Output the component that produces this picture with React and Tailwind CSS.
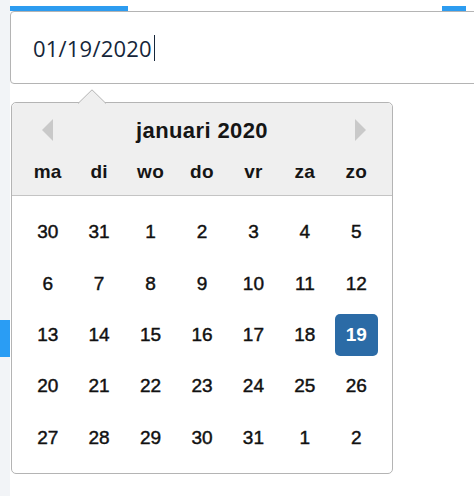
import React from "react";

const weekDays = ["ma", "di", "wo", "do", "vr", "za", "zo"];

const weeks = [
  [30, 31, 1, 2, 3, 4, 5],
  [6, 7, 8, 9, 10, 11, 12],
  [13, 14, 15, 16, 17, 18, 19],
  [20, 21, 22, 23, 24, 25, 26],
  [27, 28, 29, 30, 31, 1, 2],
];

const App = () => {
  const selected = { week: 2, day: 6 };

  return (
    <div className="w-[474px] h-[496px] flex overflow-hidden bg-white font-['Liberation_Sans',Arial,sans-serif]">
      {/* left rail */}
      <div className="w-[10px] shrink-0 bg-[#f2f4f7] pt-[320px]">
        <div className="h-[37px] bg-[#2a9df4]" />
      </div>

      <div className="flex-1 pt-[6px]">
        {/* tab indicators */}
        <div className="flex h-[5px]">
          <div className="w-[118px] bg-[#2d9cf0]" />
          <div className="w-[24px] ml-[314px] bg-[#2d9cf0]" />
        </div>

        {/* date input */}
        <div className="h-[73px] w-[480px] border border-[#b4b4b4] rounded-[4px] flex items-center pl-[22px]">
          <span className="font-['Open_Sans',sans-serif] text-[22px] text-[#15263a] leading-none tracking-[0.2px]">
            01/19/2020
          </span>
          <span className="w-px h-[26px] bg-[#15263a] ml-[2px]" />
        </div>

        {/* picker */}
        <div className="relative mt-[18px] ml-px w-[382px] h-[372px] border border-[#b4b4b4] rounded-[5px] bg-white">
          <svg
            className="absolute left-[66px] top-[-14px]"
            width="28"
            height="15"
            viewBox="0 0 28 15"
          >
            <path d="M0 14.5 L14 0.8 L28 14.5" fill="#efefef" stroke="#b4b4b4" strokeWidth="1" />
          </svg>

          <div className="bg-[#efefef] rounded-t-[5px] border-b border-[#c4c4c4] h-[93px] px-[10px] pt-[12px]">
            <div className="h-[30px] flex items-center">
              <div className="w-[51px] flex justify-center">
                <svg width="12" height="22" viewBox="0 0 12 22">
                  <path d="M11 0 L0 11 L11 22 Z" fill="#c9c9c9" />
                </svg>
              </div>
              <div className="flex-1 text-center text-[22px] font-bold text-[#151515] tracking-[0.4px]">
                januari 2020
              </div>
              <div className="w-[51px] flex justify-center pl-[6px]">
                <svg width="12" height="22" viewBox="0 0 12 22">
                  <path d="M1 0 L12 11 L1 22 Z" fill="#c9c9c9" />
                </svg>
              </div>
            </div>
            <div className="grid grid-cols-7 h-[26px] mt-[13px] items-center">
              {weekDays.map((d) => (
                <div key={d} className="text-center text-[19px] font-bold text-[#151515] tracking-[0.3px]">
                  {d}
                </div>
              ))}
            </div>
          </div>

          <div className="px-[10px] pt-[11px]">
            {weeks.map((week, wi) => (
              <div key={wi} className="grid grid-cols-7 h-[51.3px]">
                {week.map((day, di) => {
                  const isSelected = wi === selected.week && di === selected.day;
                  return (
                    <div key={di} className="flex items-center justify-center">
                      <div
                        className={
                          isSelected
                            ? "w-[43px] h-[42px] rounded-[5px] bg-[#2b6ba6] text-white font-bold flex items-center justify-center text-[19px]"
                            : "w-[43px] h-[42px] flex items-center justify-center text-[19px] text-[#111] [-webkit-text-stroke:0.45px_#111]"
                        }
                      >
                        {day}
                      </div>
                    </div>
                  );
                })}
              </div>
            ))}
          </div>
        </div>
      </div>
    </div>
  );
};

export default App;
